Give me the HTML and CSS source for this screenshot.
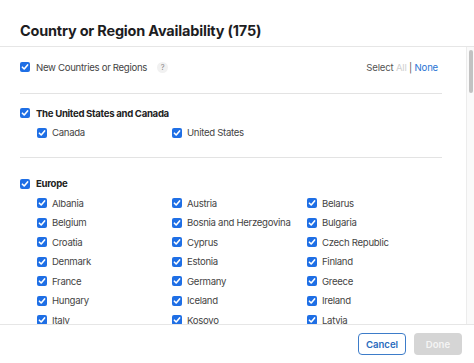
FILE: index.html
```html
<!DOCTYPE html>
<html lang="en">
<head>
<meta charset="UTF-8">
<meta name="viewport" content="width=device-width, initial-scale=1.0">
<title>Country or Region Availability</title>
<link rel="stylesheet" href="styles.css">
</head>
<body>

<div class="dialog">
  <div class="dialog-header">
    <h2>Country or Region Availability (175)</h2>
  </div>

  <div class="dialog-body">
    <div class="scroll-content">
      <div class="section section-top">
        <label class="check-row">
          <span class="box"><svg viewBox="0 0 10 10"><path d="M2.4 5.2 L4.2 7 L7.6 2.9" /></svg></span>
          New Countries or Regions
          <span class="help">?</span>
        </label>
        <div class="select-links">
          Select <span class="disabled">All</span> <span class="bar">|</span> <a href="#">None</a>
        </div>
      </div>

      <div class="section section-na">
        <label class="check-row group-title">
          <span class="box"><svg viewBox="0 0 10 10"><path d="M2.4 5.2 L4.2 7 L7.6 2.9" /></svg></span>
          The United States and Canada
        </label>
        <div class="grid" id="na-grid"></div>
      </div>

      <div class="section section-eu">
        <label class="check-row group-title">
          <span class="box"><svg viewBox="0 0 10 10"><path d="M2.4 5.2 L4.2 7 L7.6 2.9" /></svg></span>
          Europe
        </label>
        <div class="grid" id="eu-grid"></div>
      </div>
    </div>

    <div class="scrollbar">
      <div class="scroll-thumb"></div>
    </div>
  </div>

  <div class="dialog-footer">
    <a href="#" class="button button-cancel">Cancel</a>
    <a href="#" class="button button-done">Done</a>
  </div>
</div>

<script>
  document.addEventListener('DOMContentLoaded', function() {
    // Countries per region (only the rows in view)
    const northAmerica = ['Canada', 'United States'];
    const europe = [
      'Albania', 'Austria', 'Belarus',
      'Belgium', 'Bosnia and Herzegovina', 'Bulgaria',
      'Croatia', 'Cyprus', 'Czech Republic',
      'Denmark', 'Estonia', 'Finland',
      'France', 'Germany', 'Greece',
      'Hungary', 'Iceland', 'Ireland',
      'Italy', 'Kosovo', 'Latvia'
    ];

    function fillGrid(id, names) {
      const grid = document.getElementById(id);
      names.forEach(name => {
        const item = document.createElement('label');
        item.className = 'check-row';
        item.innerHTML = `
          <span class="box"><svg viewBox="0 0 10 10"><path d="M2.4 5.2 L4.2 7 L7.6 2.9" /></svg></span>
          ${name}
        `;
        grid.appendChild(item);
      });
    }

    fillGrid('na-grid', northAmerica);
    fillGrid('eu-grid', europe);
  });
</script>

</body>
</html>
```

FILE: styles.css
```css
/* General Styles */
body {
  font-family: Inter, "Noto Sans", sans-serif;
  margin: 0;
  padding: 0;
  color: #333;
  background-color: #fff;
}

.dialog {
  width: 474px;
  height: 363px;
  display: flex;
  flex-direction: column;
}

/* Header */
.dialog-header {
  height: 47px;
  box-sizing: border-box;
  border-bottom: 1px solid #e6e6e6;
  padding: 22px 20px 0;
}

.dialog-header h2 {
  margin: 0;
  font-size: 14.5px;
  line-height: 18px;
  font-weight: 700;
  letter-spacing: -0.2px;
  color: #1d1d1f;
}

/* Scrolling body */
.dialog-body {
  flex: 1;
  display: flex;
  min-height: 0;
}

.scroll-content {
  flex: 1;
  overflow: hidden;
  padding: 0 24px 0 20px;
}

.scrollbar {
  width: 8px;
  border-left: 1px solid #ececec;
  background-color: #fafafa;
  padding: 3px 1px 0 2px;
  box-sizing: border-box;
}

.scroll-thumb {
  height: 43px;
  border-radius: 3px;
  background-color: #c2c2c2;
}

.section {
  border-bottom: 1px solid #e3e3e3;
}

.section-top {
  padding: 10px 0 16px;
  display: flex;
  justify-content: space-between;
  align-items: center;
}

.section-na {
  padding: 9px 0 14px;
}

.section-eu {
  padding: 16px 0 0;
  border-bottom: none;
}

/* Checkbox rows */
.check-row {
  display: flex;
  align-items: center;
  height: 20px;
  font-size: 9.6px;
  letter-spacing: -0.3px;
  color: #444;
  white-space: nowrap;
}

.group-title {
  font-weight: 700;
  color: #222;
}

.box {
  width: 10px;
  height: 10px;
  border-radius: 2px;
  background-color: #1f6fe5;
  margin-right: 6px;
  flex-shrink: 0;
  display: flex;
}

.box svg {
  width: 10px;
  height: 10px;
}

.box path {
  fill: none;
  stroke: #fff;
  stroke-width: 1.6;
  stroke-linecap: round;
  stroke-linejoin: round;
}

.help {
  margin-left: 10px;
  width: 11px;
  height: 11px;
  border-radius: 50%;
  background-color: #f1f1f1;
  color: #8a8a8a;
  font-size: 7.5px;
  letter-spacing: 0;
  display: flex;
  align-items: center;
  justify-content: center;
}

.select-links {
  font-size: 9.6px;
  letter-spacing: -0.2px;
  color: #555;
  margin-right: 4px;
}

.select-links .disabled {
  color: #d0d0d0;
}

.select-links .bar {
  color: #555;
}

.select-links a {
  color: #2b74d4;
  text-decoration: none;
}

/* Country grid */
.grid {
  display: grid;
  grid-template-columns: 135px 135px 135px;
  grid-auto-rows: 19.5px;
  padding-left: 17px;
}

.grid .check-row {
  height: 19.5px;
}

.grid .box {
  margin-right: 5px;
}

/* Footer */
.dialog-footer {
  height: 38px;
  border-top: 1px solid #e6e6e6;
  display: flex;
  justify-content: flex-end;
  align-items: center;
  gap: 8px;
  padding: 0 12px 0 0;
}

.button {
  display: inline-flex;
  align-items: center;
  justify-content: center;
  width: 48px;
  height: 22px;
  box-sizing: border-box;
  border-radius: 4px;
  font-size: 9.6px;
  font-weight: 600;
  text-decoration: none;
}

.button-cancel {
  border: 1px solid #3d7cc9;
  color: #2a6bbd;
  background-color: #fff;
}

.button-done {
  background-color: #d5d5d5;
  color: #f4f4f4;
}
```
